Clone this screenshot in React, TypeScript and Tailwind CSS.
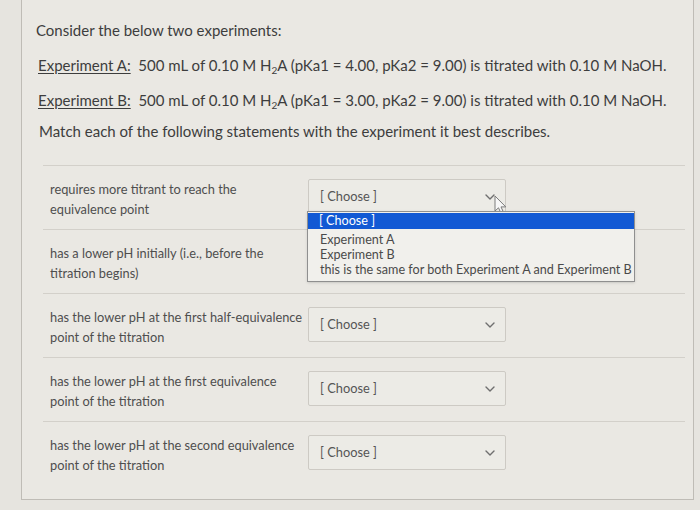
import React from "react";

const statements = [
  "requires more titrant to reach the equivalence point",
  "has a lower pH initially (i.e., before the titration begins)",
  "has the lower pH at the first half-equivalence point of the titration",
  "has the lower pH at the first equivalence point of the titration",
  "has the lower pH at the second equivalence point of the titration",
];

const options = [
  "Experiment A",
  "Experiment B",
  "this is the same for both Experiment A and Experiment B",
];

function Chevron() {
  return (
    <svg width="10" height="6" viewBox="0 0 10 6" className="shrink-0">
      <path d="M1 1 L5 5 L9 1" fill="none" stroke="#6f6f6f" strokeWidth="1.4" strokeLinecap="round" strokeLinejoin="round" />
    </svg>
  );
}

// mouse pointer resting on the open select
function Pointer() {
  return (
    <svg width="14" height="20" viewBox="0 0 14 20" className="absolute left-[186px] top-[16px]">
      <path
        d="M1 1 L1 16 L4.5 12.8 L7.2 18.6 L9.6 17.5 L7 11.9 L11.8 11.9 Z"
        fill="#f7f7f7"
        stroke="#7c7c7c"
        strokeWidth="1"
        strokeLinejoin="round"
      />
    </svg>
  );
}

function Select({ open }: { open?: boolean }) {
  return (
    <div className="relative w-[198px]">
      <div className="h-[35px] flex items-center justify-between pl-[11px] pr-[10px] border border-[#cdcac4] bg-[#ecebe6] rounded-[2px] text-[12.8px] text-[#555]">
        <span>[ Choose ]</span>
        <Chevron />
      </div>
      {open && (
        <>
          <Pointer />
          <div className="absolute left-[-1px] top-[32px] w-[328px] z-10 border border-[#8f8f8f] bg-[#f1f0ec] pb-[4px] shadow-sm text-[12.6px] leading-[15px] text-[#4a4a4a] whitespace-nowrap">
            <div className="bg-[#1259d4] text-white pl-[11px] h-[16px] leading-[16px] mt-[1px] mb-[3px]">[ Choose ]</div>
            {options.map((o) => (
              <div key={o} className="pl-[12px]">{o}</div>
            ))}
          </div>
        </>
      )}
    </div>
  );
}

export default function App() {
  return (
    <div className="w-[700px] h-[510px] overflow-hidden bg-[#e6e4df] font-['Lato',sans-serif]">
      <div className="ml-[21px] w-[673px] h-[500px] border-l border-r border-b border-[#bfbcb6] bg-[#eae8e3]">
        <div className="pl-[14px] pt-[20px] text-[15px] leading-[20px] text-[#3d3d3d]">
          <p>Consider the below two experiments:</p>
          <p className="mt-[15px] pl-[2px]">
            <span className="underline underline-offset-2">Experiment A:</span>&nbsp; 500 mL of 0.10 M H
            <sub className="text-[10px]">2</sub>A (pKa1 = 4.00, pKa2 = 9.00) is titrated with 0.10 M NaOH.
          </p>
          <p className="mt-[15px] pl-[2px]">
            <span className="underline underline-offset-2">Experiment B:</span>&nbsp; 500 mL of 0.10 M H
            <sub className="text-[10px]">2</sub>A (pKa1 = 3.00, pKa2 = 9.00) is titrated with 0.10 M NaOH.
          </p>
          <p className="mt-[11px] pl-[3px]">Match each of the following statements with the experiment it best describes.</p>
        </div>

        <div className="mt-[24px] ml-[21px] mr-[8px] border-t border-[#d3d0ca]">
          {statements.map((s, i) => (
            <div
              key={s}
              className={`flex items-start pt-[13px] pb-[10px] ${i < statements.length - 1 ? "border-b border-[#d3d0ca]" : ""}`}
            >
              <p className="w-[265px] pl-[7px] pr-[4px] text-[12.8px] leading-[20px] text-[#4e4e4e]">{s}</p>
              <Select open={i === 0} />
            </div>
          ))}
        </div>
      </div>
    </div>
  );
}
